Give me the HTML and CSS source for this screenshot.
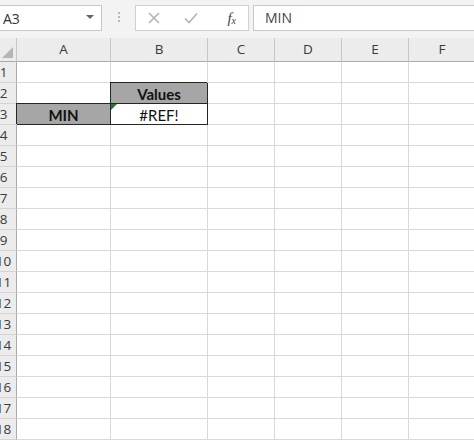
FILE: index.html
```html
<!DOCTYPE html>
<html lang="en">
<head>
    <meta charset="UTF-8">
    <title>MIN</title>
    <link rel="stylesheet" href="styles.css">
</head>
<body>
    <div class="toolbar">
        <div class="namebox">
            <span>A3</span>
            <span class="arrow"></span>
        </div>
        <div class="grip"><i></i><i></i><i></i></div>
        <div class="fx-buttons">
            <svg width="14" height="14" viewBox="0 0 14 14"><path d="M2 2 L12 12 M12 2 L2 12" stroke="#b4b4b4" stroke-width="1.6" fill="none"/></svg>
            <svg width="16" height="14" viewBox="0 0 16 14"><path d="M2 7.5 L6 11.5 L14 2.5" stroke="#b4b4b4" stroke-width="1.6" fill="none"/></svg>
            <span class="fx">f<sub>x</sub></span>
        </div>
        <div class="formula">MIN</div>
    </div>

    <div class="sheet">
        <div class="corner"><span></span></div>
        <div class="col-head">A</div>
        <div class="col-head">B</div>
        <div class="col-head">C</div>
        <div class="col-head">D</div>
        <div class="col-head">E</div>
        <div class="col-head">F</div>
    </div>

    <script>
        // build rows 1..18
        const sheet = document.querySelector(".sheet");
        const cells = {
            "2-1": { text: "Values", cls: "filled boxed bold" },
            "3-0": { text: "MIN", cls: "filled boxed bold" },
            "3-1": { text: "#REF!", cls: "boxed error" }
        };
        for (let r = 1; r <= 18; r++) {
            const head = document.createElement("div");
            head.className = "row-head";
            head.textContent = r;
            sheet.appendChild(head);
            for (let c = 0; c < 6; c++) {
                const cell = document.createElement("div");
                const data = cells[r + "-" + c];
                cell.className = "cell" + (data ? " " + data.cls : "");
                if (data) cell.textContent = data.text;
                sheet.appendChild(cell);
            }
        }
    </script>
</body>
</html>
```

FILE: styles.css
```css
/* Excel-like sheet */
body {
    margin: 0;
    background-color: #fff;
    font-family: "Open Sans", "Noto Sans", sans-serif;
    overflow: hidden;
    width: 474px;
    height: 440px;
}
.toolbar {
    height: 38px;
    background-color: #f3f3f3;
    display: flex;
    align-items: flex-start;
    padding-top: 5px;
    box-sizing: border-box;
}
.namebox {
    width: 102px;
    height: 26px;
    box-sizing: border-box;
    background-color: #fff;
    border: 1px solid #c8c8c8;
    border-left: none;
    display: flex;
    align-items: center;
    justify-content: space-between;
    padding: 0 7px 0 3px;
    font-size: 14px;
    color: #333;
}
.namebox .arrow {
    width: 0;
    height: 0;
    border-left: 4px solid transparent;
    border-right: 4px solid transparent;
    border-top: 4px solid #666;
    margin-top: -3px;
}
.grip {
    width: 33px;
    display: flex;
    flex-direction: column;
    align-items: center;
    gap: 2px;
    padding-top: 7px;
}
.grip i {
    width: 2px;
    height: 2px;
    background-color: #b8b8b8;
}
.fx-buttons {
    width: 114px;
    height: 26px;
    box-sizing: border-box;
    background-color: #fff;
    border: 1px solid #d0d0d0;
    display: flex;
    align-items: center;
    padding: 0 12px 0 11px;
    gap: 22px;
}
.fx {
    font-family: "Liberation Serif", serif;
    font-style: italic;
    font-size: 15px;
    color: #444;
    margin-left: auto;
    line-height: 1;
}
.fx sub {
    font-size: 10px;
    vertical-align: baseline;
    position: relative;
    top: 1px;
}
.formula {
    flex: 1;
    margin-left: 4px;
    height: 26px;
    box-sizing: border-box;
    background-color: #fff;
    border: 1px solid #c8c8c8;
    border-right: none;
    font-size: 14px;
    color: #444;
    padding-left: 11px;
    line-height: 24px;
}
.sheet {
    display: grid;
    grid-template-columns: 26px 94px 97px 67px 67px 67px 67px;
    grid-template-rows: 24px;
    grid-auto-rows: 21px;
    margin-left: -9px;
}
.corner,
.col-head,
.row-head {
    background-color: #ececec;
    box-sizing: border-box;
    color: #3a3a3a;
    font-size: 13.5px;
}
.corner {
    border-right: 1px solid #c6c6c6;
    border-bottom: 1px solid #ababab;
    position: relative;
}
.corner span {
    position: absolute;
    right: 3px;
    bottom: 3px;
    width: 0;
    height: 0;
    border-left: 11px solid transparent;
    border-bottom: 11px solid #b5b5b5;
}
.col-head {
    border-right: 1px solid #c6c6c6;
    border-bottom: 1px solid #ababab;
    text-align: center;
    line-height: 23px;
}
.row-head {
    border-right: 1px solid #ababab;
    border-bottom: 1px solid #d4d4d4;
    text-align: center;
    line-height: 20px;
    overflow: hidden;
}
.cell {
    box-sizing: border-box;
    border-right: 1px solid #d9d9d9;
    border-bottom: 1px solid #d9d9d9;
    font-family: "Lato", sans-serif;
    font-size: 15px;
    color: #111;
    text-align: center;
    line-height: 19px;
    padding-top: 2px;
}
.cell.filled {
    background-color: #a6a6a6;
}
.cell.boxed {
    border-right-color: #262626;
    border-bottom-color: #262626;
    box-shadow: -1px -1px 0 #262626;
}
.cell.bold {
    font-weight: bold;
}
.cell.error {
    position: relative;
}
.cell.error::before {
    content: "";
    position: absolute;
    left: 0;
    top: 0;
    border-top: 6px solid #1e7a2c;
    border-right: 6px solid transparent;
}
```
